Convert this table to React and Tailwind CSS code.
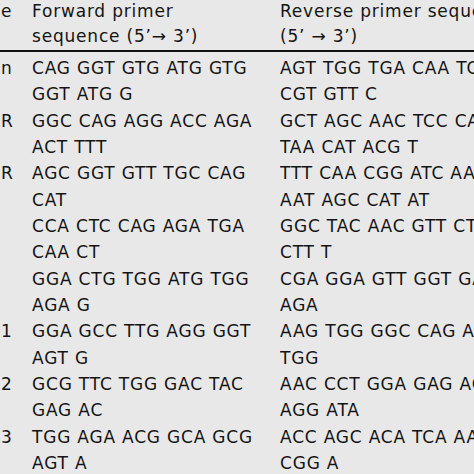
import React from "react";

const rows = [
  ["n", ["CAG GGT GTG ATG GTG", "GGT ATG G"], ["AGT TGG TGA CAA TCG TGG", "CGT GTT C"]],
  ["R", ["GGC CAG AGG ACC AGA", "ACT TTT"], ["GCT AGC AAC TCC CAT CAA", "TAA CAT ACG T"]],
  ["R", ["AGC GGT GTT TGC CAG", "CAT"], ["TTT CAA CGG ATC AAC TCC", "AAT AGC CAT AT"]],
  ["", ["CCA CTC CAG AGA TGA", "CAA CT"], ["GGC TAC AAC GTT CTC CTC", "CTT T"]],
  ["", ["GGA CTG TGG ATG TGG", "AGA G"], ["CGA GGA GTT GGT GAA GCT", "AGA"]],
  ["1", ["GGA GCC TTG AGG GGT", "AGT G"], ["AAG TGG GGC CAG AGC AAG", "TGG"]],
  ["2", ["GCG TTC TGG GAC TAC", "GAG AC"], ["AAC CCT GGA GAG ACT GCT", "AGG ATA"]],
  ["3", ["TGG AGA ACG GCA GCG", "AGT A"], ["ACC AGC ACA TCA AAC AGC", "CGG A"]],
];

export default function App() {
  return (
    <div
      className="w-[474px] h-[474px] overflow-hidden bg-[#e8e8e8] text-[#141414] text-[17px] tracking-[0.8px]"
      style={{ fontFamily: '"DejaVu Sans", sans-serif' }}
    >
      <div className="grid grid-cols-[32px_248px_1fr] h-[50px] leading-[25px] -mt-[1px] whitespace-nowrap">
        <div className="overflow-hidden pl-[1px]">
          <div>e</div>
        </div>
        <div className="overflow-hidden">
          <div>Forward primer</div>
          <div>sequence (5’→ 3’)</div>
        </div>
        <div className="overflow-hidden">
          <div>Reverse primer sequence</div>
          <div>(5’ → 3’)</div>
        </div>
      </div>
      <div className="h-[2px] bg-[#111] mt-[1px]" />
      <div className="pt-[3px] leading-[26.33px] whitespace-nowrap">
        {rows.map((r, i) => (
          <div key={i} className="grid grid-cols-[32px_248px_1fr]">
            <div className="overflow-hidden pl-[1px]">{r[0]}</div>
            <div>
              <div>{r[1][0]}</div>
              <div>{r[1][1]}</div>
            </div>
            <div className="overflow-hidden">
              <div>{r[2][0]}</div>
              <div>{r[2][1]}</div>
            </div>
          </div>
        ))}
      </div>
    </div>
  );
}
